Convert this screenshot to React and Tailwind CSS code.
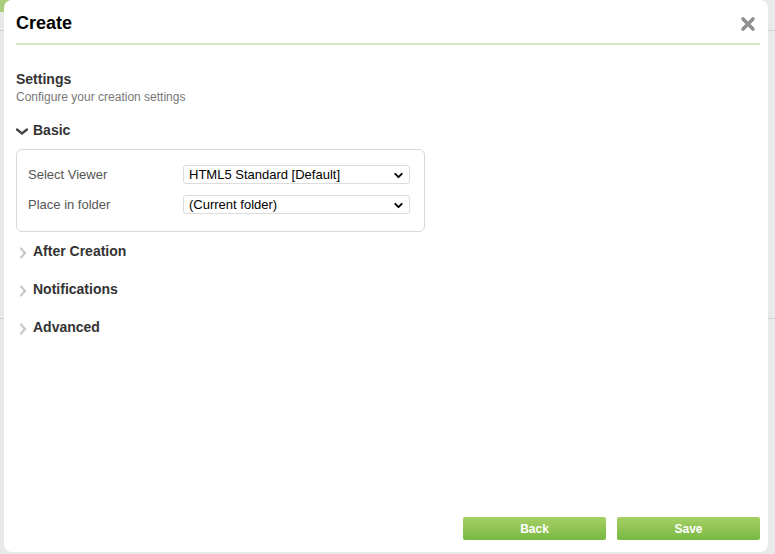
import { ChevronDown } from 'lucide-react'

const SECTIONS = ['After Creation', 'Notifications', 'Advanced']

function Chevron({ open }) {
  if (open) {
    return (
      <svg width="12" height="8" viewBox="0 0 12 8" className="mr-[5px] mt-[2px]">
        <path d="M1 1.5 L6 5.5 L11 1.5" fill="none" stroke="#444" strokeWidth="2.4" strokeLinecap="round" />
      </svg>
    )
  }
  return (
    <svg width="8" height="12" viewBox="0 0 8 12" className="ml-[3px] mr-[6px] mt-[3px]">
      <path d="M2 1.5 L6 6 L2 10.5" fill="none" stroke="#c8c8c8" strokeWidth="2.2" strokeLinecap="round" />
    </svg>
  )
}

function Select({ value }) {
  return (
    <div className="relative w-[227px] h-[19px] border border-[#dcdcdc] rounded-[3px] bg-white flex items-center pl-[5px] text-[13px] text-black">
      {value}
      <ChevronDown size={13} strokeWidth={3.5} className="absolute right-[4px] top-[3px] text-black" />
    </div>
  )
}

export default function App() {
  return (
    <div className="w-[775px] h-[554px] bg-[#e9e9e9] overflow-hidden relative" style={{ fontFamily: '"Liberation Sans", Arial, sans-serif' }}>
      {/* bits of the page behind the dialog */}
      <div className="absolute left-0 top-0 w-[10px] h-[12px] bg-[#a9cf7e]" />
      <div className="absolute left-0 top-[30px] w-full h-px bg-[#d0d0d0]" />
      <div className="absolute left-0 top-[318px] w-full h-px bg-[#d0d0d0]" />

      <div className="relative ml-[4px] w-[764px] h-[552px] bg-white rounded-[8px] flex flex-col">
        {/* header */}
        <div className="ml-[12px] mr-[8px] h-[45px] pt-[4px] border-b-2 border-[#d6e9c3] flex items-center justify-between">
          <h1 className="text-[18px] font-bold text-black">Create</h1>
          <svg width="16" height="16" viewBox="0 0 16 16" className="mr-[4px] mt-[1px]">
            <path d="M3 3 L13 13 M13 3 L3 13" stroke="#8f8f8f" strokeWidth="3.6" strokeLinecap="round" />
          </svg>
        </div>

        <div className="px-[12px] pt-[26px] flex-1">
          <div className="text-[14px] font-bold text-[#333] leading-[17px]">Settings</div>
          <div className="text-[12px] text-[#777] leading-[15px] mt-[2px]">Configure your creation settings</div>

          <div className="mt-[15px] flex items-center text-[14px] font-bold text-[#333]">
            <Chevron open />
            Basic
          </div>

          <div className="mt-[8px] w-[409px] h-[83px] border border-[#d8d8d8] rounded-[6px] px-[11px] pt-[15px] flex flex-col gap-[10px]">
            <div className="flex items-center">
              <span className="w-[155px] text-[13px] text-[#555]">Select Viewer</span>
              <Select value="HTML5 Standard [Default]" />
            </div>
            <div className="flex items-center">
              <span className="w-[155px] text-[13px] text-[#555]">Place in folder</span>
              <Select value="(Current folder)" />
            </div>
          </div>

          <div className="mt-[11px] flex flex-col gap-[21px]">
            {SECTIONS.map(s => (
              <div key={s} className="flex items-center text-[14px] font-bold text-[#333] h-[17px]">
                <Chevron />
                {s}
              </div>
            ))}
          </div>
        </div>

        {/* footer buttons */}
        <div className="flex justify-end gap-[11px] px-[8px] pb-[12px]">
          {['Back', 'Save'].map(b => (
            <button
              key={b}
              className="w-[143px] h-[23px] rounded-[2px] bg-gradient-to-b from-[#a6d064] to-[#78b843] text-white text-[12px] font-bold"
            >
              {b}
            </button>
          ))}
        </div>
      </div>
    </div>
  )
}
